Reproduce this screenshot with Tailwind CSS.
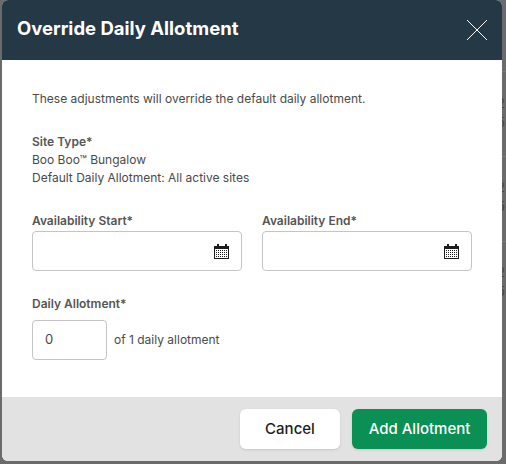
<!DOCTYPE html>
<html lang="en">
<head>
  <meta charset="UTF-8">
  <title>Override Daily Allotment</title>
  <script src="https://cdn.jsdelivr.net/npm/@tailwindcss/browser@4"></script>
</head>
<body class="bg-[#6b6b6b] font-['Inter','Liberation_Sans',sans-serif] text-[#4a4a4a]">
  <div class="flex w-[506px] h-[464px] overflow-hidden">
    <!-- left edge of the page behind -->
    <div class="w-[2px] shrink-0"></div>

    <!-- Modal -->
    <div class="w-[500px] h-[461px] shrink-0 flex flex-col bg-white rounded-[6px] overflow-hidden">
      <header class="h-[60px] bg-[#243845] flex items-center justify-between pl-[15px] pr-[15px] pb-[2px] shrink-0">
        <h1 class="text-[18.5px] font-bold text-white">Override Daily Allotment</h1>
        <svg class="w-[20px] h-[20px] mt-[2px]" viewBox="0 0 20 20" fill="none" stroke="#ffffff" stroke-width="1">
          <path d="M0 0L20 20M20 0L0 20" />
        </svg>
      </header>

      <main class="flex-1 px-[30px] pt-[30px]">
        <p class="text-[12px] leading-[18px]">These adjustments will override the default daily allotment.</p>

        <div class="mt-[25px] text-[12px] leading-[18px]">
          <p class="font-semibold text-[#555555]">Site Type*</p>
          <p>Boo Boo™ Bungalow</p>
          <p>Default Daily Allotment: All active sites</p>
        </div>

        <div class="mt-[25px] flex gap-[20px]">
          <div class="w-[210px]">
            <label class="block text-[12px] leading-[18px] font-semibold text-[#555555] mb-[1px]">Availability Start*</label>
            <div class="h-[40px] border border-[#c4c4c4] rounded-[4px] flex items-center justify-end pr-[12px]">
              <svg class="w-[15px] h-[15px]" viewBox="0 0 15 15" fill="none" stroke="#1c1c1c" shape-rendering="crispEdges">
                <rect x="0.5" y="2.5" width="14" height="12" />
                <path d="M3.5 0v3M11.5 0v3" stroke-width="2" />
                <path d="M1 4h13" stroke-width="2" />
                <path d="M2 6.5h11M2 8.5h11M2 10.5h11M2 12.5h11" />
                <path d="M3.5 6v7M5.5 6v7M7.5 6v7M9.5 6v7M11.5 6v7" stroke="#ffffff" />
              </svg>
            </div>
          </div>
          <div class="w-[210px]">
            <label class="block text-[12px] leading-[18px] font-semibold text-[#555555] mb-[1px]">Availability End*</label>
            <div class="h-[40px] border border-[#c4c4c4] rounded-[4px] flex items-center justify-end pr-[12px]">
              <svg class="w-[15px] h-[15px]" viewBox="0 0 15 15" fill="none" stroke="#1c1c1c" shape-rendering="crispEdges">
                <rect x="0.5" y="2.5" width="14" height="12" />
                <path d="M3.5 0v3M11.5 0v3" stroke-width="2" />
                <path d="M1 4h13" stroke-width="2" />
                <path d="M2 6.5h11M2 8.5h11M2 10.5h11M2 12.5h11" />
                <path d="M3.5 6v7M5.5 6v7M7.5 6v7M9.5 6v7M11.5 6v7" stroke="#ffffff" />
              </svg>
            </div>
          </div>
        </div>

        <div class="mt-[24px]">
          <label class="block text-[12px] leading-[18px] font-semibold text-[#555555] mb-[7px]">Daily Allotment*</label>
          <div class="flex items-center gap-[7px]">
            <div class="w-[75px] h-[40px] border border-[#c4c4c4] rounded-[4px] flex items-center pl-[12px] text-[13px]">0</div>
            <span class="text-[12px]">of 1 daily allotment</span>
          </div>
        </div>
      </main>

      <footer class="h-[64px] bg-[#e2e2e2] flex items-center justify-end gap-[12px] pr-[15px] shrink-0">
        <button class="w-[100px] h-[40px] bg-white rounded-[6px] text-[15px] font-medium text-[#1c1c1c] shadow-sm">Cancel</button>
        <button class="w-[135px] h-[40px] bg-[#0a8f55] rounded-[6px] text-[15px] font-medium text-white shadow-sm">Add Allotment</button>
      </footer>
    </div>

    <!-- sliver of the dimmed page on the right -->
    <div class="w-[4px] shrink-0 overflow-hidden text-[13px] leading-[19px] text-[#444444]">
      <div class="h-[72px] pt-[43px] border-b border-[#7c7c7c]"><p class="-ml-[5px]">i</p></div>
      <div class="h-[85px] pt-[22px] border-b border-[#7c7c7c]"><p class="-ml-[5px]">2</p><p class="-ml-[5px]">5</p></div>
      <div class="h-[85px] pt-[21px] border-b border-[#7c7c7c]"><p class="-ml-[5px]">2</p><p class="-ml-[5px]">5</p></div>
      <div class="h-[85px] pt-[21px]"><p class="-ml-[5px]">2</p><p class="-ml-[5px]">5</p></div>
    </div>
  </div>
</body>
</html>
